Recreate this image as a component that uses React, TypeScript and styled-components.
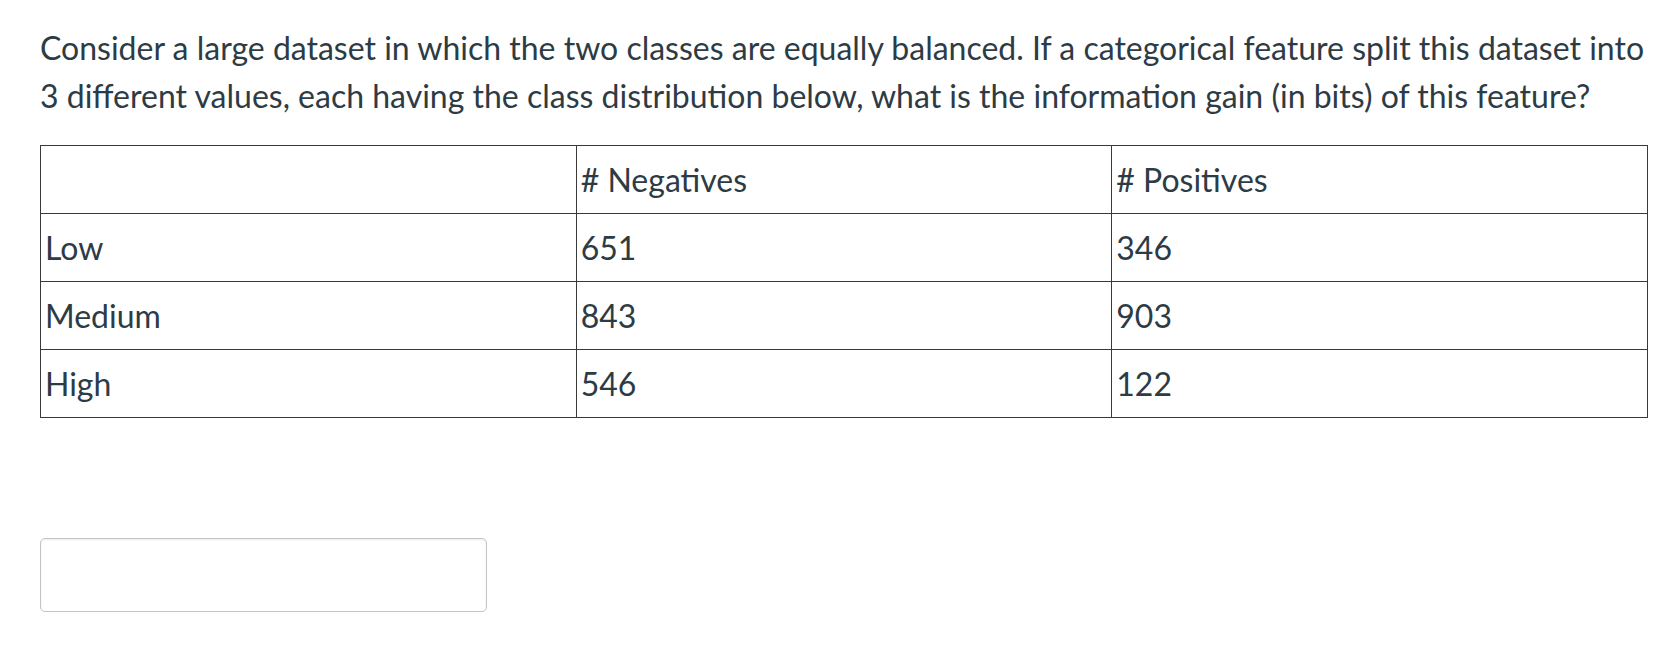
import React from 'react';
import styled, { createGlobalStyle } from 'styled-components';

const GlobalStyle = createGlobalStyle`
  html, body {
    margin: 0;
    padding: 0;
    background: #ffffff;
  }
  body {
    font-family: Lato, "Open Sans", "Liberation Sans", sans-serif;
    color: #2d3b45;
  }
`;

const Page = styled.div`
  width: 1608px;
  padding: 24px 24px 0 40px;
`;

const Question = styled.p`
  margin: 0 0 25px 0;
  font-size: 32px;
  line-height: 48px;
`;

const Table = styled.table`
  width: 100%;
  border-collapse: collapse;
  table-layout: fixed;
  border: 1px solid #8a8a8a;
`;

const Cell = styled.td`
  height: 67px;
  padding: 0 4px;
  border: 1px solid #3a3a3a;
  font-size: 32px;
  line-height: 40px;
  vertical-align: middle;
  text-align: left;
  font-weight: 400;
`;

const HeadCell = styled(Cell).attrs({ as: 'th' })``;

const AnswerInput = styled.input`
  display: block;
  box-sizing: border-box;
  margin-top: 120px;
  width: 447px;
  height: 74px;
  border: 1.5px solid #c4c4c4;
  border-radius: 5px;
  background: #fff;
  box-shadow: inset 0 1px 2px rgba(0, 0, 0, 0.08);
  font-family: Lato, "Liberation Sans", sans-serif;
  font-size: 28px;
  padding: 0 12px;
  outline: none;
`;

const rows = [
  { label: 'Low', neg: 651, pos: 346 },
  { label: 'Medium', neg: 843, pos: 903 },
  { label: 'High', neg: 546, pos: 122 },
];

const App: React.FC = () => {
  return (
    <>
      <GlobalStyle />
      <Page>
        <Question>
          Consider a large dataset in which the two classes are equally balanced. If a categorical feature split this dataset into
          3 different values, each having the class distribution below, what is the information gain (in bits) of this feature?
        </Question>
        <Table>
          <thead>
            <tr>
              <HeadCell></HeadCell>
              <HeadCell># Negatives</HeadCell>
              <HeadCell># Positives</HeadCell>
            </tr>
          </thead>
          <tbody>
            {rows.map(r => (
              <tr key={r.label}>
                <Cell>{r.label}</Cell>
                <Cell>{r.neg}</Cell>
                <Cell>{r.pos}</Cell>
              </tr>
            ))}
          </tbody>
        </Table>
        <AnswerInput type="text" aria-label="Answer" />
      </Page>
    </>
  );
};

export default App;
